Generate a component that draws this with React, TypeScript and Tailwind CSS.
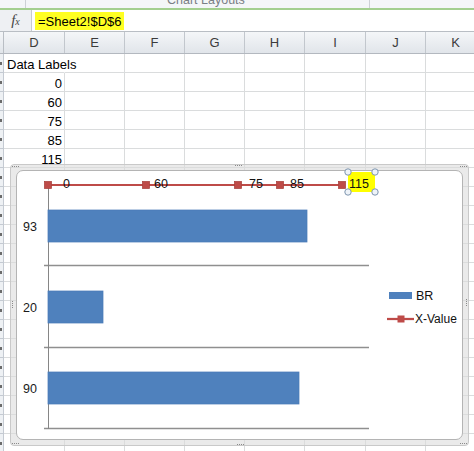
import React from 'react';

const cols = [
  { label: 'D', w: 'w-[61px]' },
  { label: 'E', w: 'w-[60px]' },
  { label: 'F', w: 'w-[60px]' },
  { label: 'G', w: 'w-[60px]' },
  { label: 'H', w: 'w-[60px]' },
  { label: 'I', w: 'w-[61px]' },
  { label: 'J', w: 'w-[60px]' },
  { label: 'K', w: 'w-[60px]' },
];

const dataLabels = ['Data Labels', '0', '60', '75', '85', '115'];
const rowCount = 21;

// marcadores de la serie X-Value (posiciones en px de la página)
const markers = [
  { x: 48, label: '0', lx: 63 },
  { x: 146, label: '60', lx: 154 },
  { x: 238, label: '75', lx: 249 },
  { x: 280, label: '85', lx: 290 },
  { x: 342, label: '115', lx: 349 },
];

const bars = [
  { label: '93', y: 210, w: 259 },
  { label: '20', y: 291, w: 55 },
  { label: '90', y: 372, w: 251 },
];

const Dots = ({ vertical = false }: { vertical?: boolean }) => (
  <span className={`flex ${vertical ? 'flex-col' : 'flex-row'} gap-[1px]`}>
    {[0, 1, 2, 3].map(i => (
      <span key={i} className="block w-[1px] h-[1px] bg-[#8a8a8a]" />
    ))}
  </span>
);

function Chart() {
  return (
    <div className="absolute left-[10px] top-[164px] w-[459px] h-[282px] rounded-[4px] border border-[#c9c9c9] bg-[#dcdcdc]/60 p-[5px]">
      {/* handles del marco seleccionado */}
      <span className="absolute left-[224px] top-[0px]"><Dots /></span>
      <span className="absolute left-[226px] bottom-[0px]"><Dots /></span>
      <span className="absolute left-[1px] top-[136px]"><Dots vertical /></span>
      <span className="absolute right-[1px] top-[134px]"><Dots vertical /></span>
      <span className="absolute left-[1px] top-[1px]"><Dots /></span>
      <span className="absolute right-[1px] top-[1px]"><Dots /></span>
      <span className="absolute left-[1px] bottom-[1px]"><Dots /></span>
      <span className="absolute right-[1px] bottom-[1px]"><Dots /></span>

      <div className="relative w-full h-full rounded-[7px] border border-[#b4b4b4] bg-white">
        <svg
          width={445}
          height={268}
          viewBox="17 171 445 268"
          className="absolute left-0 top-0 overflow-visible"
          fontSize={12.5}
        >
          {/* líneas de categoría */}
          <path d="M44 265.5H369M44 347.5H369M44 428.5H369" stroke="#8f8f8f" strokeWidth={1.5} fill="none" />
          <line x1={48.5} y1={184} x2={48.5} y2={429} stroke="#868686" strokeWidth={1} />

          {bars.map(b => (
            <g key={b.label}>
              <rect x={48} y={b.y} width={b.w} height={32} fill="#4f81bd" stroke="#4a7cb8" strokeWidth={0.75} />
              <text x={37} y={b.y + 21} textAnchor="end" fill="#1a1a1a">{b.label}</text>
            </g>
          ))}

          {/* serie X-Value */}
          <line x1={48} y1={185} x2={342} y2={185} stroke="#be4b48" strokeWidth={2} />
          {markers.map(m => (
            <rect key={m.label} x={m.x - 3.5} y={181.5} width={7} height={7} fill="#be4b48" stroke="#a8403d" strokeWidth={0.75} />
          ))}
          <rect x={348} y={172} width={27} height={20} fill="#ffff00" />
          {markers.map(m => (
            <text key={m.label} x={m.lx} y={188} fill="#111">{m.label}</text>
          ))}
          {[[348, 172], [375, 172], [348, 192], [375, 192]].map(([cx, cy]) => (
            <circle key={`${cx}-${cy}`} cx={cx} cy={cy} r={3.2} fill="#eef3f8" stroke="#7f96b0" strokeWidth={1} />
          ))}

          {/* leyenda */}
          <rect x={389} y={292} width={23} height={7} fill="#4f81bd" />
          <text x={416} y={300} fill="#111">BR</text>
          <line x1={387} y1={319} x2={414} y2={319} stroke="#be4b48" strokeWidth={2.25} />
          <rect x={397.5} y={315.5} width={7} height={7} fill="#be4b48" />
          <text x={415} y={323} fill="#111" fontSize={12}>X-Value</text>
        </svg>
      </div>
    </div>
  );
}

export default function App() {
  return (
    <div className="relative w-[474px] h-[451px] overflow-hidden bg-white font-['Liberation_Sans',Arial,sans-serif] text-[12.5px] text-black">
      {/* cinta superior */}
      <div className="flex h-[10px] bg-[#f4f6f8] border-b-2 border-[#a3cf8f]">
        <div className="w-[26px] shrink-0 border-r border-[#cdd1d6]" />
        <div className="w-[344px] shrink-0 border-r border-[#cdd1d6] overflow-hidden">
          <span className="block -mt-[7px] pl-[141px] text-[12.5px] leading-[14px] text-[#7a7f86] whitespace-nowrap">Chart Layouts</span>
        </div>
        <div className="flex-1" />
      </div>

      {/* barra de fórmulas */}
      <div className="flex h-[22px] border-b border-[#b9bec4]">
        <div className="w-[32px] shrink-0 flex items-center justify-center bg-[#eef0f3] border-r border-[#c6cad0]">
          <span className="font-['Liberation_Serif',serif] italic text-[15px] text-[#444]">f<span className="text-[10px]">x</span></span>
        </div>
        <div className="flex-1 flex items-center pl-[3px]">
          <span className="bg-[#ffff22] px-[3px] h-[18px] leading-[19px] text-[13px]">=Sheet2!$D$6</span>
        </div>
      </div>

      {/* encabezados de columna */}
      <div className="flex h-[22px] bg-gradient-to-b from-[#f4f6f8] to-[#e1e5ea] border-b border-[#b3b8bf]">
        <div className="w-[4px] shrink-0 border-r border-[#b9bec4]" />
        {cols.map(c => (
          <div key={c.label} className={`${c.w} shrink-0 border-r border-[#c2c7cd] flex items-center justify-center text-[13px] leading-[23px] text-[#3b3b3b]`}>
            {c.label}
          </div>
        ))}
      </div>

      {/* celdas */}
      {Array.from({ length: rowCount }).map((_, r) => (
        <div key={r} className="flex h-[19px]">
          <div className="w-[4px] shrink-0 flex items-center bg-[#eef1f4] border-r border-b border-[#c4cad2]">
            <span className="block w-[2px] h-[3px] bg-[#6b6b6b]" />
          </div>
          {cols.map((c, i) => {
            const text = i === 0 ? dataLabels[r] : undefined;
            const isHeader = r === 0 && i === 0;
            return (
              <div
                key={c.label}
                className={`${c.w} shrink-0 border-b border-[#dadcdd] ${isHeader ? 'border-r border-r-transparent' : 'border-r border-[#dadcdd]'} leading-[21px] text-[13px] whitespace-nowrap ${isHeader ? 'pl-[3px] overflow-visible relative z-10' : 'text-right pr-[2px]'}`}
              >
                {text}
              </div>
            );
          })}
        </div>
      ))}

      <Chart />
    </div>
  );
}
